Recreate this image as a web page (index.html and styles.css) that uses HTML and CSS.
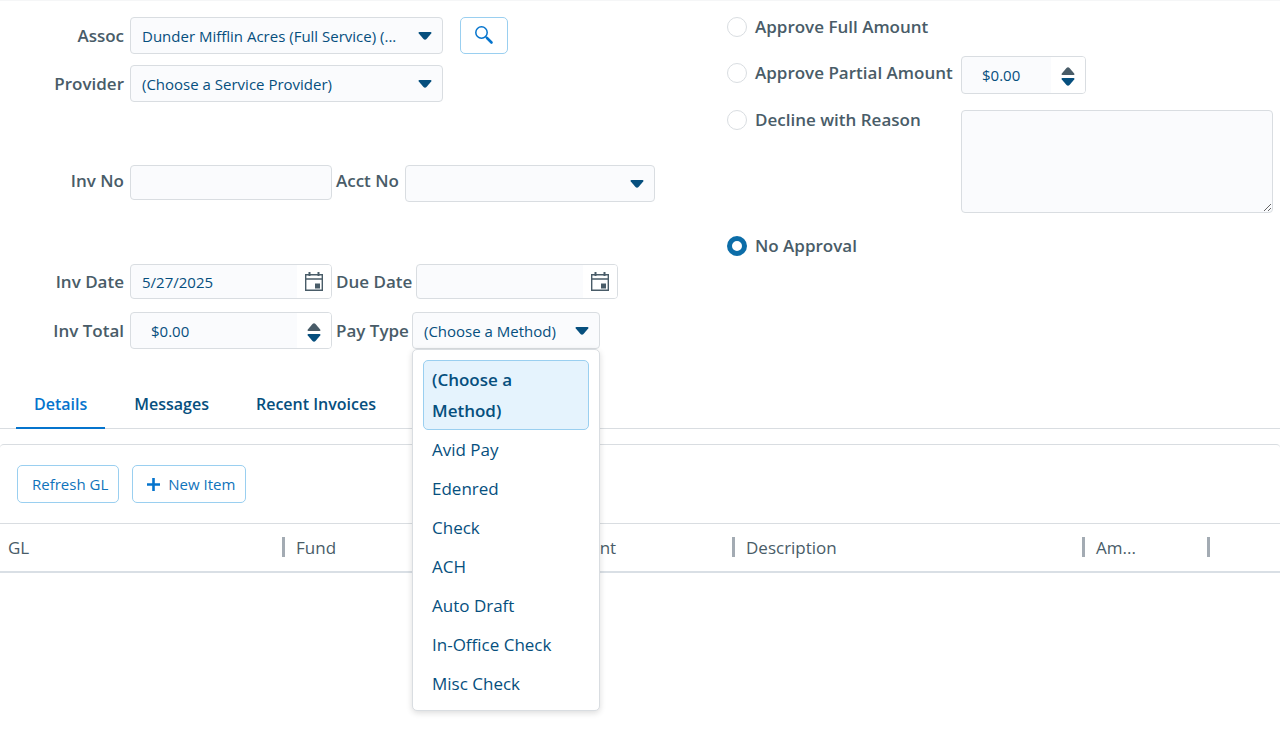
FILE: index.html
```html
<!DOCTYPE html>
<html lang="en">
<head>
    <meta charset="UTF-8">
    <meta name="viewport" content="width=device-width, initial-scale=1.0">
    <title>Invoice Entry</title>
    <link rel="stylesheet" href="styles.css">
</head>
<body>
    <form class="invoice">
        <!-- Invoice fields -->
        <div class="fields">
            <div class="row">
                <label class="row-label" for="assoc">Assoc</label>
                <div class="select select-lg">
                    <select id="assoc">
                        <option>Dunder Mifflin Acres (Full Service) (...</option>
                    </select>
                    <svg class="arrow" viewBox="0 0 14 8"><path d="M1.500 0h11q1.500.2.700 1.500L8.500 7q-1.500 1.600-3 0L.8 1.500Q0 .2 1.500 0z"/></svg>
                </div>
                <button type="button" class="btn btn-search" aria-label="Search">
                    <svg viewBox="0 0 20 20" width="20" height="20"><circle cx="7.500" cy="7.500" r="5.700" fill="none" stroke="currentColor" stroke-width="1.500"/><path d="M11.700 11.700l1.500 1.500" stroke="currentColor" stroke-width="1.500"/><path d="M13 13l4.500 4.500" stroke="currentColor" stroke-width="2.600" stroke-linecap="round"/></svg>
                </button>
            </div>
            <div class="row row-provider">
                <label class="row-label" for="provider">Provider</label>
                <div class="select select-lg">
                    <select id="provider">
                        <option>(Choose a Service Provider)</option>
                    </select>
                    <svg class="arrow" viewBox="0 0 14 8"><path d="M1.500 0h11q1.500.2.700 1.500L8.500 7q-1.500 1.600-3 0L.8 1.500Q0 .2 1.500 0z"/></svg>
                </div>
            </div>
            <div class="row row-number">
                <label class="row-label" for="invNo">Inv No</label>
                <input class="field" type="text" id="invNo">
                <label class="side-label side-acct" for="acctNo">Acct No</label>
                <div class="select select-md">
                    <select id="acctNo">
                        <option></option>
                    </select>
                    <svg class="arrow" viewBox="0 0 14 8"><path d="M1.500 0h11q1.500.2.700 1.500L8.500 7q-1.500 1.600-3 0L.8 1.500Q0 .2 1.500 0z"/></svg>
                </div>
            </div>
            <div class="row row-date">
                <label class="row-label" for="invDate">Inv Date</label>
                <div class="field combo">
                    <input type="text" id="invDate" value="5/27/2025">
                    <button type="button" aria-label="Pick invoice date">
                        <svg viewBox="0 0 20 20" width="20" height="20"><path d="M1.700 2.700h16.600v15.600H1.700zM1.700 7h16.600" fill="none" stroke="currentColor" stroke-width="1.400"/><path d="M4.500 0h2v4h-2zM13.500 0h2v4h-2zM11 11.500h5v5h-5z" fill="currentColor"/></svg>
                    </button>
                </div>
                <label class="side-label side-due" for="dueDate">Due Date</label>
                <div class="field combo">
                    <input type="text" id="dueDate">
                    <button type="button" aria-label="Pick due date">
                        <svg viewBox="0 0 20 20" width="20" height="20"><path d="M1.700 2.700h16.600v15.600H1.700zM1.700 7h16.600" fill="none" stroke="currentColor" stroke-width="1.400"/><path d="M4.500 0h2v4h-2zM13.500 0h2v4h-2zM11 11.500h5v5h-5z" fill="currentColor"/></svg>
                    </button>
                </div>
            </div>
            <div class="row">
                <label class="row-label" for="invTotal">Inv Total</label>
                <div class="field combo amount">
                    <input type="text" id="invTotal" value="$0.00">
                    <div class="spin">
                        <button type="button" aria-label="Increase"><svg viewBox="0 0 14 8"><path d="M1.500 8h11q1.500-.2.700-1.500L8.500 1q-1.500-1.600-3 0L.8 6.500Q0 7.800 1.500 8z"/></svg></button>
                        <button type="button" aria-label="Decrease"><svg viewBox="0 0 14 8"><path d="M1.500 0h11q1.500.2.700 1.500L8.500 7q-1.500 1.600-3 0L.8 1.500Q0 .2 1.500 0z"/></svg></button>
                    </div>
                </div>
                <label class="side-label side-pay" for="payType">Pay Type</label>
                <div class="select select-sm">
                    <select id="payType">
                        <option>(Choose a Method)</option>
                    </select>
                    <svg class="arrow" viewBox="0 0 14 8"><path d="M1.500 0h11q1.500.2.700 1.500L8.500 7q-1.500 1.600-3 0L.8 1.500Q0 .2 1.500 0z"/></svg>
                    <ul class="menu" role="listbox" aria-label="Pay Type">
                        <li class="selected" role="option" aria-selected="true">(Choose a Method)</li>
                        <li role="option">Avid Pay</li>
                        <li role="option">Edenred</li>
                        <li role="option">Check</li>
                        <li role="option">ACH</li>
                        <li role="option">Auto Draft</li>
                        <li role="option">In-Office Check</li>
                        <li role="option">Misc Check</li>
                    </ul>
                </div>
            </div>
        </div>

        <!-- Approval options -->
        <div class="approval">
            <div class="choice">
                <input type="radio" name="approval" id="approveFull">
                <label for="approveFull">Approve Full Amount</label>
            </div>
            <div class="choice choice-partial">
                <input type="radio" name="approval" id="approvePartial">
                <label for="approvePartial">Approve Partial Amount</label>
            </div>
            <div class="field combo amount amount-partial">
                <input type="text" value="$0.00" aria-label="Partial amount">
                <div class="spin">
                    <button type="button" aria-label="Increase"><svg viewBox="0 0 14 8"><path d="M1.500 8h11q1.500-.2.700-1.500L8.500 1q-1.500-1.600-3 0L.8 6.500Q0 7.800 1.500 8z"/></svg></button>
                    <button type="button" aria-label="Decrease"><svg viewBox="0 0 14 8"><path d="M1.500 0h11q1.500.2.700 1.500L8.500 7q-1.500 1.600-3 0L.8 1.500Q0 .2 1.500 0z"/></svg></button>
                </div>
            </div>
            <div class="choice choice-decline">
                <input type="radio" name="approval" id="decline">
                <label for="decline">Decline with Reason</label>
            </div>
            <textarea aria-label="Decline reason"></textarea>
            <div class="choice choice-none">
                <input type="radio" name="approval" id="noApproval" checked>
                <label for="noApproval">No Approval</label>
            </div>
        </div>
    </form>

    <nav class="tabs">
        <a class="active" href="#details">Details</a>
        <a href="#messages">Messages</a>
        <a href="#recent">Recent Invoices</a>
    </nav>

    <section class="panel" id="details">
        <div class="toolbar">
            <button type="button" class="btn">Refresh GL</button>
            <button type="button" class="btn">
                <svg viewBox="0 0 13 13" width="13" height="13"><path d="M6.500 0v13M0 6.500h13" stroke="#0574cd" stroke-width="2.600"/></svg>
                New Item
            </button>
        </div>
        <table>
            <colgroup>
                <col class="col-gl">
                <col class="col-fund">
                <col class="col-account">
                <col class="col-desc">
                <col class="col-amount">
                <col>
            </colgroup>
            <thead>
                <tr>
                    <th>GL</th>
                    <th>Fund</th>
                    <th>Account</th>
                    <th>Description</th>
                    <th>Am...</th>
                    <th></th>
                </tr>
            </thead>
        </table>
    </section>
</body>
</html>
```
FILE: styles.css
```css
* {
    box-sizing: border-box;
    margin: 0;
    padding: 0;
}

body {
    min-height: 100vh;
    font-family: "Open Sans", "Noto Sans", sans-serif;
    font-size: 17px;
    color: #495c68;
    background-color: #fff;
    border-top: 1px solid #f5f6f7;
}

input,
select,
textarea,
button {
    font-family: inherit;
    font-size: 15px;
    color: #064f7e;
}

button {
    cursor: pointer;
}

/* Form layout */
.invoice {
    display: grid;
    grid-template-columns: 1fr 553px;
    padding-top: 16px;
}

.row {
    display: flex;
    align-items: center;
}

.row-provider {
    margin-top: 11px;
}

.row-number {
    margin-top: 63px;
    align-items: flex-start;
}

.row-number label {
    line-height: 32px;
}

.row-date {
    margin: 62px 0 13px;
}

.row-label {
    width: 130px;
    padding-right: 6px;
    text-align: right;
}

label {
    font-weight: 600;
    line-height: 20px;
    white-space: nowrap;
}

.side-label {
    padding-left: 4px;
}

.side-acct {
    width: 73px;
}

.side-due {
    width: 84px;
}

.side-pay {
    width: 80px;
}

/* Inputs */
.field,
.select select,
textarea {
    border: 1px solid #d9dde1;
    border-radius: 4px;
    background-color: #fafbfd;
    outline: none;
}

.field {
    width: 202px;
    height: 35px;
    padding: 0 11px;
}

.combo {
    display: flex;
    padding: 0;
    overflow: hidden;
}

.combo input {
    flex: 1;
    min-width: 0;
    padding: 0 11px;
    border: none;
    background: none;
    outline: none;
}

.combo button {
    width: 34px;
    border: none;
    background-color: #fff;
    color: #495c68;
    display: flex;
    align-items: center;
    justify-content: center;
}

.amount {
    height: 37px;
}

.amount input {
    padding-left: 20px;
}

.amount-partial {
    width: 125px;
    height: 38px;
}

.spin {
    display: flex;
    flex-direction: column;
    justify-content: center;
    gap: 3px;
    padding-top: 3px;
    background-color: #fff;
}

.combo .spin button {
    height: 8px;
}

.spin svg {
    width: 14px;
    height: 8px;
    fill: #495c68;
}

.spin button:last-child svg {
    fill: #064f7e;
}

.select {
    position: relative;
}

.select select {
    display: block;
    width: 100%;
    height: 37px;
    padding: 0 34px 0 11px;
    appearance: none;
}

.select-lg {
    width: 313px;
}

.select-md {
    width: 250px;
}

.select-sm {
    width: 188px;
}

.arrow {
    position: absolute;
    right: 11px;
    top: 15px;
    width: 14px;
    height: 8px;
    fill: #064f7e;
    pointer-events: none;
}

/* Pay type list */
.menu {
    position: absolute;
    top: 100%;
    left: 0;
    width: 100%;
    padding: 10px 10px 7px;
    list-style: none;
    background-color: #fff;
    border: 1px solid #d9dde1;
    border-radius: 5px;
    box-shadow: 0 2px 6px rgba(0, 0, 0, 0.14);
    z-index: 10;
}

.menu li {
    padding: 3px 8px;
    border: 1px solid transparent;
    border-radius: 5px;
    line-height: 31px;
    color: #064f7e;
}

.menu .selected {
    font-weight: 600;
    background-color: #e5f3fd;
    border-color: #9acff0;
}

/* Buttons */
.btn {
    display: flex;
    align-items: center;
    justify-content: center;
    gap: 8px;
    height: 38px;
    padding: 0 10px 0 14px;
    border: 1px solid #9acff0;
    border-radius: 5px;
    background-color: #fff;
    color: #0f73bb;
}

.btn-search {
    width: 48px;
    height: 37px;
    margin-left: 17px;
    padding: 0 0 2px;
    color: #0574cd;
}

/* Approval */
.approval {
    display: grid;
    grid-template-columns: 234px 1fr;
    align-content: start;
    align-items: start;
    padding-right: 7px;
}

.choice {
    grid-column: 1;
    display: flex;
    align-items: center;
    gap: 8px;
    height: 20px;
}

.choice:first-child {
    margin-bottom: 19px;
}

.choice-partial {
    height: 34px;
}

.choice-decline {
    margin-top: 16px;
}

.choice-none {
    margin-top: 23px;
}

.choice input {
    width: 20px;
    height: 20px;
    border: 1px solid #d9dde1;
    border-radius: 50%;
    appearance: none;
}

.choice input:checked {
    border: 5px solid #0c6da8;
}

textarea {
    width: 100%;
    height: 103px;
    margin-top: 16px;
    padding: 8px;
}

.approval textarea,
.amount-partial {
    grid-column: 2;
}

/* Tabs */
.tabs {
    display: flex;
    gap: 11px;
    padding: 31px 16px 0;
    border-bottom: 1px solid #d9dde1;
}

.tabs a {
    padding: 12px 18px 11px;
    margin-bottom: -1px;
    border-bottom: 2px solid transparent;
    line-height: 24px;
    font-size: 16px;
    font-weight: 600;
    color: #064f7e;
    text-decoration: none;
}

.tabs .active {
    color: #0574cd;
    border-bottom-color: #0574cd;
}

/* Details grid */
.panel {
    margin-top: 15px;
    border-top: 1px solid #d9dde1;
    border-radius: 4px 4px 0 0;
}

.toolbar {
    display: flex;
    gap: 13px;
    padding: 20px 17px;
}

table {
    width: 100%;
    table-layout: fixed;
    border-spacing: 0;
    border-top: 1px solid #d9dde1;
    border-bottom: 2px solid #d9dfe5;
}

.col-gl {
    width: 288px;
}

.col-fund {
    width: 256px;
}

.col-account {
    width: 194px;
}

.col-desc {
    width: 350px;
}

.col-amount {
    width: 125px;
}

th {
    position: relative;
    height: 47px;
    padding: 0 8px;
    text-align: left;
    font-weight: 400;
}

/* Column resize handle */
th:not(:last-child)::after {
    content: "";
    position: absolute;
    top: 13px;
    right: 3px;
    width: 3px;
    height: 20px;
    background-color: #a3abb3;
}
```
